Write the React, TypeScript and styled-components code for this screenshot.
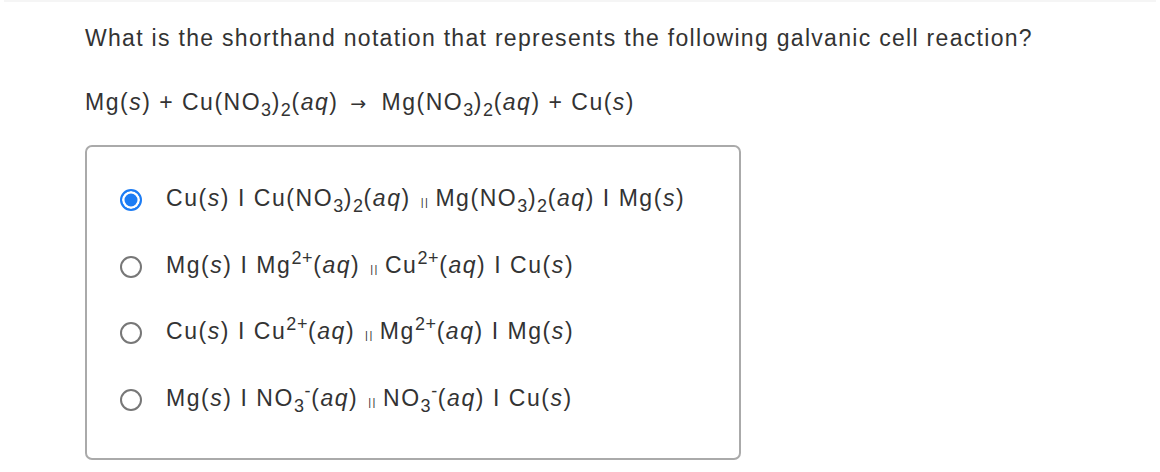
import React from "react";
import styled, { createGlobalStyle } from "styled-components";

const Global = createGlobalStyle`
  html, body { margin: 0; padding: 0; background: #fff; }
  body { font-family: "Liberation Sans", Arial, Helvetica, sans-serif; color: #333; }
`;

const TopRule = styled.div`
  height: 2px;
  margin: 0 4px;
  background: #f5f5f5;
`;

const Page = styled.div`
  padding: 19px 0 0 85px;
`;

const Text = styled.p`
  margin: 0;
  height: 34px;
  font-size: 23px;
  line-height: 34px;
  letter-spacing: 1.3px;
  white-space: nowrap;
`;

const Equation = styled(Text)`
  margin-top: 30px;
  letter-spacing: 1.5px;
`;

const Box = styled.div`
  margin-top: 26px;
  width: 656px;
  box-sizing: border-box;
  border: 2px solid #aaaaaa;
  border-radius: 7px;
  padding: 36px 0 41px 33px;
  display: flex;
  flex-direction: column;
  gap: 32.5px;
`;

const Option = styled.label`
  display: flex;
  align-items: center;
  gap: 24px;
  height: 34px;
  font-size: 23px;
  line-height: 34px;
  letter-spacing: 1.55px;
  white-space: nowrap;
`;

const Radio = styled.span<{ $checked?: boolean }>`
  width: 22px;
  height: 22px;
  box-sizing: border-box;
  border-radius: 50%;
  flex: none;
  border: 2px solid ${(p) => (p.$checked ? "#1c7cf4" : "#777")};
  background: ${(p) => (p.$checked ? "#1c7cf4" : "#fff")};
  box-shadow: ${(p) => (p.$checked ? "inset 0 0 0 2.5px #fff" : "none")};
`;

const Sub = styled.sub`
  font-size: 18px;
  line-height: 0;
  letter-spacing: 0.6px;
  vertical-align: -6px;
`;

const Sup = styled.sup`
  font-size: 18px;
  line-height: 0;
  letter-spacing: 0.6px;
  vertical-align: 9px;
`;

const Dbl = styled.span`
  font-size: 11px;
  letter-spacing: 1.5px;
  padding: 0 6px 0 2px;
`;

const Arrow = styled.span`
  font-family: "DejaVu Sans", sans-serif;
  font-size: 19px;
  padding: 0 6px 0 4px;
`;

const s = <i>s</i>;
const aq = <i>aq</i>;

export default function App() {
  return (
    <>
      <Global />
      <TopRule />
      <Page>
        <Text>
          What is the shorthand notation that represents the following galvanic cell reaction?
        </Text>
        <Equation>
          Mg({s}) + Cu(NO<Sub>3</Sub>)<Sub>2</Sub>({aq}) <Arrow>→</Arrow> Mg(NO<Sub>3</Sub>)<Sub>2</Sub>({aq}) + Cu({s})
        </Equation>
        <Box>
          <Option>
            <Radio $checked />
            <span>
              Cu({s}) I Cu(NO<Sub>3</Sub>)<Sub>2</Sub>({aq}) <Dbl>||</Dbl>Mg(NO<Sub>3</Sub>)<Sub>2</Sub>({aq}) I Mg({s})
            </span>
          </Option>
          <Option>
            <Radio />
            <span>
              Mg({s}) I Mg<Sup>2+</Sup>({aq}) <Dbl>||</Dbl>Cu<Sup>2+</Sup>({aq}) I Cu({s})
            </span>
          </Option>
          <Option>
            <Radio />
            <span>
              Cu({s}) I Cu<Sup>2+</Sup>({aq}) <Dbl>||</Dbl>Mg<Sup>2+</Sup>({aq}) I Mg({s})
            </span>
          </Option>
          <Option>
            <Radio />
            <span>
              Mg({s}) I NO<Sub>3</Sub><Sup>-</Sup>({aq}) <Dbl>||</Dbl>NO<Sub>3</Sub><Sup>-</Sup>({aq}) I Cu({s})
            </span>
          </Option>
        </Box>
      </Page>
    </>
  );
}
